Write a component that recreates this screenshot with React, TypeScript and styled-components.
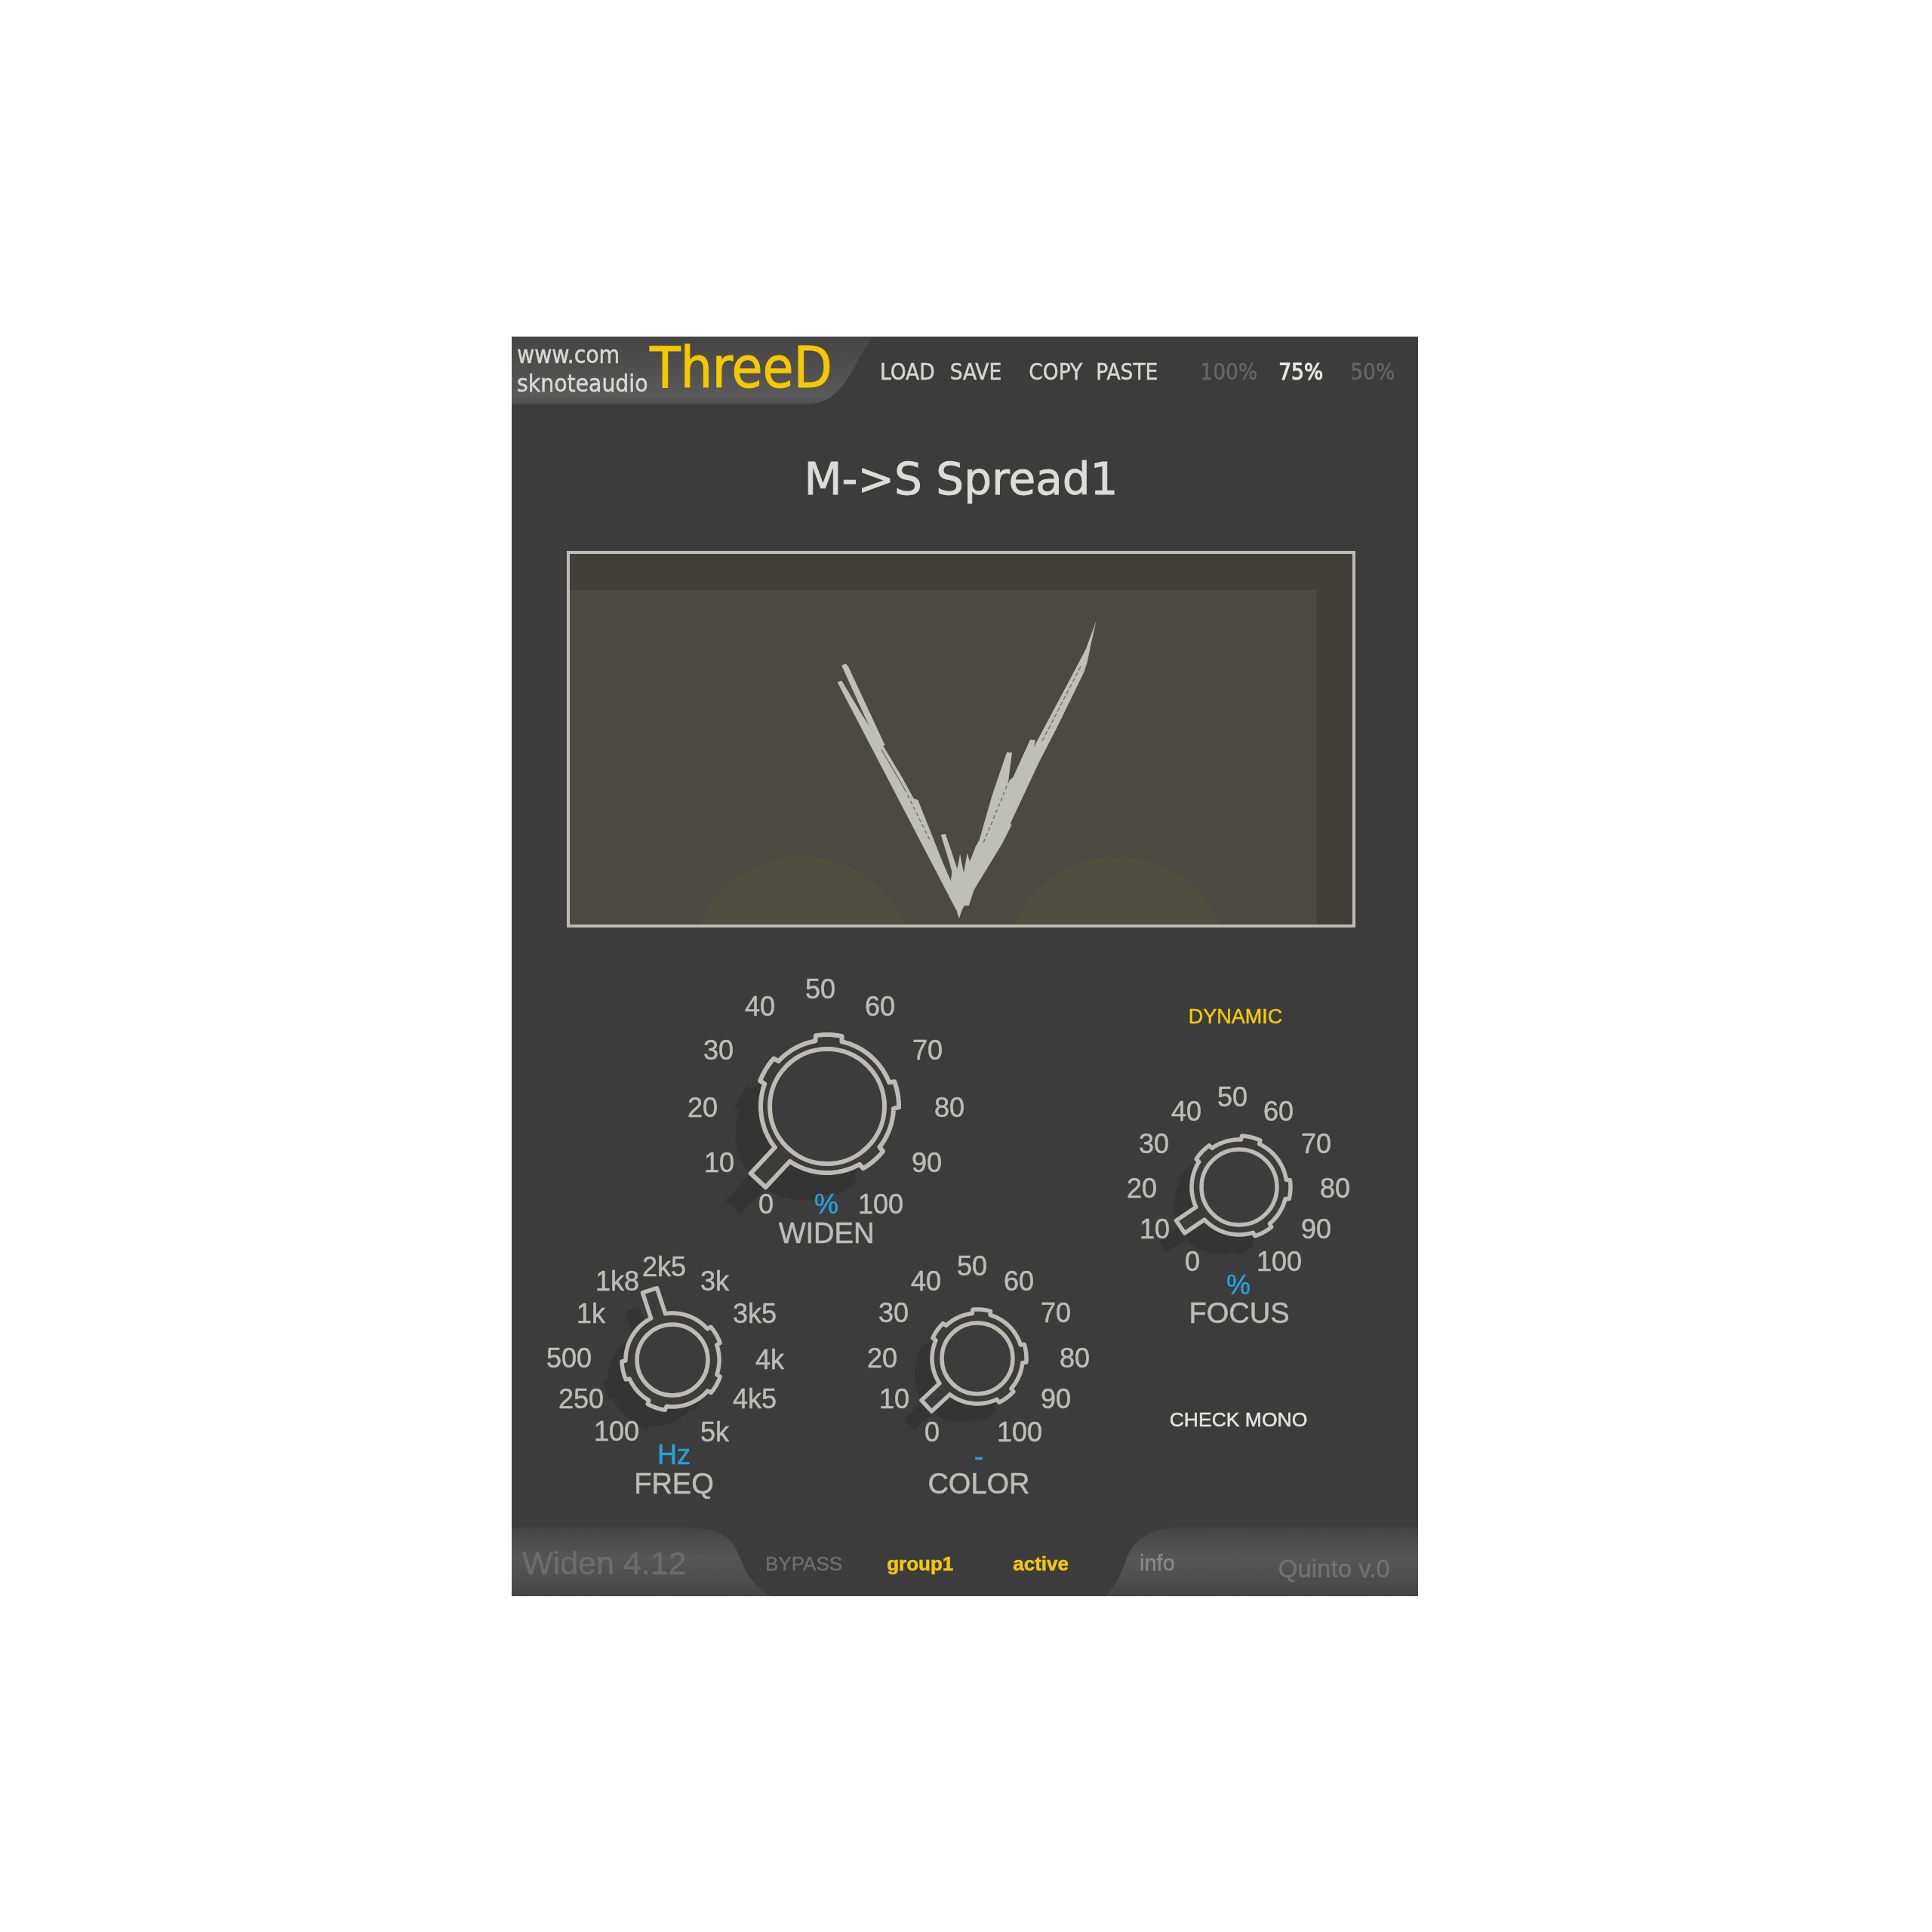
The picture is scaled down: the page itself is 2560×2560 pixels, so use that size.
import styled, { createGlobalStyle } from "styled-components"

const GlobalStyle = createGlobalStyle`
  html, body {
    margin: 0;
    background: #ffffff;
  }
`

const Page = styled.div`
  width: 2560px;
  height: 2560px;
  padding: 446px 0 0 678px;
  box-sizing: border-box;
  background: #ffffff;
`
const Panel = styled.div`
  width: 1201px;
  height: 1669px;
  display: flex;
  flex-direction: column;
  background: #3c3c3c;
  color: #bdbdb7;
  font-family: "Liberation Sans", Arial, sans-serif;
  -webkit-text-stroke: 0.5px currentColor;
  filter: blur(0.7px);
`

const Header = styled.header`
  height: 90px;
  display: flex;
  align-items: center;
`
const Brand = styled.div`
  width: 488px;
  height: 90px;
  flex: none;
  display: flex;
  align-items: center;
  padding-left: 7px;
  box-sizing: border-box;
  background: linear-gradient(to bottom, #444444 0%, #5a5a5a 88%, #4c4c4c 100%);
  clip-path: path("M0 0 L480 0 C462 20 452 50 436 68 C422 84 408 90 388 90 L0 90 Z");
  font-family: "DejaVu Sans Condensed", "DejaVu Sans", sans-serif;
  font-stretch: condensed;
`
const BrandLines = styled.div`
  width: 176px;
  flex: none;
  font-size: 31.5px;
  line-height: 37.5px;
  color: #d8d8d4;
  margin-top: -3px;
`
const BrandName = styled.div`
  font-size: 74px;
  line-height: 72px;
  color: #f5c800;
  margin-top: -8px;
  -webkit-text-stroke: 1px currentColor;
`
const Toolbar = styled.nav`
  display: flex;
  font-family: "DejaVu Sans Condensed", "DejaVu Sans", sans-serif;
  font-stretch: condensed;
  font-size: 29.5px;
  margin-top: 3px;
`
const ToolButton = styled.span<{ $gap: number; $tone?: string; $on?: boolean }>`
  margin-left: ${p => p.$gap}px;
  color: ${p => p.$tone ?? "#d6d6d2"};
  -webkit-text-stroke: ${p => (p.$on ? 1.1 : 0.5)}px currentColor;
`

const Title = styled.h1`
  margin: 64px 0 0;
  font: 400 58px/70px "DejaVu Sans", sans-serif;
  color: #dcdcd8;
  text-align: center;
  padding-right: 10px;
  -webkit-text-stroke: 0.9px currentColor;
`

const Monitor = styled.div`
  position: relative;
  width: 1045px;
  height: 499px;
  margin: 60px 0 0 73px;
  flex: none;
  box-sizing: border-box;
  border: 4px solid #bcbcb5;
  background: #403f3a;
  overflow: hidden;
`
const Plate = styled.div`
  height: 443px;
  width: 990px;
  margin-top: 48px;
  background: #4a4a42;
`
const Scope = styled.svg`
  position: absolute;
  inset: 0;
  width: 100%;
  height: 100%;
`

const Controls = styled.div`
  display: flex;
  height: 700px;
  margin: 56px 0 0 42px;
`
const DialColumn = styled.div`
  width: 730px;
  flex: none;
  display: flex;
  flex-direction: column;
`
const DialRow = styled.div`
  display: flex;
  justify-content: space-between;
`
const SideColumn = styled.div`
  margin-left: 40px;
  width: 310px;
  display: flex;
  flex-direction: column;
`
const DynamicLabel = styled.div`
  margin: 46px 0 0 -16px;
  font-size: 27px;
  line-height: 32px;
  color: #f2c80c;
  text-align: center;
`
const CheckMono = styled.div`
  margin: 101px 0 0 -8px;
  font-size: 26.5px;
  line-height: 30px;
  color: #e4e4e0;
  text-align: center;
`

const DialBox = styled.div<{ $w: number; $h: number; $indent?: number; $top?: number }>`
  position: relative;
  flex: none;
  width: ${p => p.$w}px;
  height: ${p => p.$h}px;
  margin-left: ${p => p.$indent ?? 0}px;
  margin-top: ${p => p.$top ?? 0}px;
`
const DialDrawing = styled.svg`
  position: absolute;
  inset: 0;
`
const Tick = styled.span<{ $x: number; $y: number }>`
  position: absolute;
  left: ${p => p.$x}px;
  top: ${p => p.$y + 1}px;
  transform: translate(-50%, -50%);
  font-size: 36px;
  line-height: 40px;
  white-space: nowrap;
  color: #bdbdb7;
`
const Unit = styled(Tick)`
  color: #2a9fdc;
`
const DialName = styled(Tick)`
  font-size: 38px;
`

const Footer = styled.footer`
  margin-top: auto;
  height: 91px;
  display: flex;
  align-items: center;
`
const FooterTab = styled.div<{ $side: "left" | "right" }>`
  height: 91px;
  display: flex;
  align-items: center;
  flex: none;
  box-sizing: border-box;
  background: linear-gradient(to bottom, #454545 0%, #565656 45%, #4e4e4e 75%, #444444 100%);
  ${p =>
    p.$side === "left"
      ? `width: 345px;
         padding-left: 14px;
         clip-path: path("M0 0 L225 0 C262 0 284 6 296 26 C306 46 314 78 345 91 L0 91 Z");`
      : `width: 415px;
         margin-left: auto;
         padding-left: 46px;
         clip-path: path("M101 0 L415 0 L415 91 L0 91 C14 78 22 60 28 44 C36 16 60 0 101 0 Z");`}
`
const Version = styled.span`
  font-size: 43px;
  color: #6c6c6c;
  margin-top: 3px;
`
const Info = styled.span`
  font-size: 29px;
  color: #888888;
  margin-top: 4px;
`
const PluginName = styled.span`
  font-size: 33px;
  color: #727272;
  margin: 19px 0 0 137px;
`
const FooterItem = styled.span<{ $gap: number; $active?: boolean }>`
  margin: 6px 0 0 ${p => p.$gap}px;
  font-size: 26px;
  font-weight: ${p => (p.$active ? 700 : 400)};
  color: ${p => (p.$active ? "#f2c80c" : "#6e6e6e")};
`

type Label = { t: string; x: number; y: number }

type KnobProps = {
  w: number
  h: number
  ox: number
  oy: number
  cx: number
  cy: number
  inner: number
  outer: number
  nub: number
  angle: number
  len: number
  pw: number
  line: number
  offsets: number[]
  labels: Label[]
  unit: Label
  name: Label
  indent?: number
  top?: number
}

const polar = (cx: number, cy: number, r: number, deg: number) => {
  const a = (deg * Math.PI) / 180
  return [cx + r * Math.sin(a), cy - r * Math.cos(a)]
}

function knobOutline(p: KnobProps, cx: number, cy: number) {
  const hw = (Math.asin(p.pw / 2 / p.outer) * 180) / Math.PI
  const span = 11
  const pts: number[][] = []
  for (let d = hw; d <= 360 - hw; d += 1) {
    const onNub = p.offsets.some(o => Math.abs(d - o) <= span)
    pts.push(polar(cx, cy, p.outer + (onNub ? p.nub : 0), p.angle + d))
  }
  pts.push(polar(cx, cy, p.outer, p.angle - hw))
  const a = (p.angle * Math.PI) / 180
  const ux = Math.sin(a)
  const uy = -Math.cos(a)
  const vx = Math.cos(a)
  const vy = Math.sin(a)
  pts.push([cx + ux * p.len - (vx * p.pw) / 2, cy + uy * p.len - (vy * p.pw) / 2])
  pts.push([cx + ux * p.len + (vx * p.pw) / 2, cy + uy * p.len + (vy * p.pw) / 2])
  return "M" + pts.map(q => `${q[0].toFixed(1)} ${q[1].toFixed(1)}`).join("L") + "Z"
}

function Knob(props: KnobProps) {
  const { w, h, ox, oy, labels, unit, name } = props
  const cx = props.cx - ox
  const cy = props.cy - oy
  const outline = knobOutline(props, cx, cy)
  const shift = props.outer * 0.38
  return (
    <DialBox $w={w} $h={h} $indent={props.indent} $top={props.top}>
      <DialDrawing width={w} height={h} viewBox={`0 0 ${w} ${h}`}>
        <path d={outline} fill="#343434" transform={`translate(${-shift} ${shift * 1.08})`} />
        <path d={outline} fill="#3c3c3c" stroke="#bcbcb5" strokeWidth={props.line} strokeLinejoin="round" />
        <circle cx={cx} cy={cy} r={props.inner} fill="none" stroke="#bcbcb5" strokeWidth={props.line} />
      </DialDrawing>
      {labels.map(l => (
        <Tick key={l.t} $x={l.x - ox} $y={l.y - oy}>
          {l.t}
        </Tick>
      ))}
      <Unit $x={unit.x - ox} $y={unit.y - oy}>
        {unit.t}
      </Unit>
      <DialName $x={name.x - ox} $y={name.y - oy}>
        {name.t}
      </DialName>
    </DialBox>
  )
}

const widenLabels: Label[] = [
  { t: "50", x: 1087, y: 1310 },
  { t: "40", x: 1007, y: 1333 },
  { t: "60", x: 1166, y: 1333 },
  { t: "30", x: 952, y: 1391 },
  { t: "70", x: 1229, y: 1391 },
  { t: "20", x: 931, y: 1467 },
  { t: "80", x: 1258, y: 1467 },
  { t: "10", x: 953, y: 1540 },
  { t: "90", x: 1228, y: 1540 },
  { t: "0", x: 1015, y: 1595 },
  { t: "100", x: 1167, y: 1595 },
]
const focusLabels: Label[] = [
  { t: "50", x: 1633, y: 1453 },
  { t: "40", x: 1572, y: 1472 },
  { t: "60", x: 1694, y: 1472 },
  { t: "30", x: 1529, y: 1515 },
  { t: "70", x: 1744, y: 1515 },
  { t: "20", x: 1513, y: 1574 },
  { t: "80", x: 1769, y: 1574 },
  { t: "10", x: 1530, y: 1628 },
  { t: "90", x: 1744, y: 1628 },
  { t: "0", x: 1580, y: 1671 },
  { t: "100", x: 1695, y: 1671 },
]
const freqLabels: Label[] = [
  { t: "2k5", x: 880, y: 1678 },
  { t: "1k8", x: 818, y: 1697 },
  { t: "3k", x: 947, y: 1697 },
  { t: "1k", x: 783, y: 1740 },
  { t: "3k5", x: 1000, y: 1740 },
  { t: "500", x: 754, y: 1799 },
  { t: "4k", x: 1020, y: 1801 },
  { t: "250", x: 770, y: 1853 },
  { t: "4k5", x: 1000, y: 1853 },
  { t: "100", x: 817, y: 1896 },
  { t: "5k", x: 947, y: 1897 },
]
const colorLabels: Label[] = [
  { t: "50", x: 1288, y: 1677 },
  { t: "40", x: 1227, y: 1697 },
  { t: "60", x: 1350, y: 1697 },
  { t: "30", x: 1184, y: 1739 },
  { t: "70", x: 1399, y: 1739 },
  { t: "20", x: 1169, y: 1799 },
  { t: "80", x: 1424, y: 1799 },
  { t: "10", x: 1185, y: 1853 },
  { t: "90", x: 1399, y: 1853 },
  { t: "0", x: 1235, y: 1897 },
  { t: "100", x: 1351, y: 1897 },
]

const nubOffsets = [78, 138, 217, 276]

function ScopeTrace() {
  return (
    <Scope viewBox="22 42 1506 1473" preserveAspectRatio="none">
      <ellipse cx={470} cy={1695} rx={218} ry={450} fill="#4f4d3d" />
      <ellipse cx={1075} cy={1695} rx={218} ry={450} fill="#4f4d3d" />
      <g fill="#bfbfb9">
        <polygon points="545,485 553,478 558,490 628,800 620,818 590,690" />
        <polygon points="537,552 545,545 590,700 625,805 660,925 684,1015 692,1020 740,1270 776,1440 772,1462 765,1455" />
        <polygon points="736,1158 745,1155 763,1265 775,1340 762,1340 752,1265" />
        <polygon points="755,1340 761,1265 766,1310 773,1235 780,1310 787,1230 795,1290 803,1205 812,1300 790,1440 770,1440" />
        <polygon points="1035,308 1025,400 1018,470 1012,510 960,730 925,870 870,1112 872,1120 855,1190 775,1462 770,1440 785,1300 803,1205 810,1180 835,1000 863,830 873,832 866,945 875,930 908,780 918,782 915,810 1000,480 1015,420" />
        <polygon points="765,1450 778,1450 771,1492" />
      </g>
      <g fill="none" stroke="#4a4a42" strokeWidth={2} opacity={0.7}>
        <polyline points="622,820 670,990" />
        <polyline points="672,1000 715,1180" strokeDasharray="14 10" />
        <polyline points="1005,490 930,790" strokeDasharray="16 8" />
        <polyline points="868,940 818,1190" strokeDasharray="14 10" />
      </g>
    </Scope>
  )
}

export default function App() {
  return (
    <Page>
      <GlobalStyle />
      <Panel>
        <Header>
          <Brand>
            <BrandLines>
              www.com
              <br />
              sknoteaudio
            </BrandLines>
            <BrandName>ThreeD</BrandName>
          </Brand>
          <Toolbar>
            <ToolButton $gap={0}>LOAD</ToolButton>
            <ToolButton $gap={20}>SAVE</ToolButton>
            <ToolButton $gap={36}>COPY</ToolButton>
            <ToolButton $gap={18}>PASTE</ToolButton>
            <ToolButton $gap={56} $tone="#666666">
              100%
            </ToolButton>
            <ToolButton $gap={28} $tone="#e6e6e2" $on>
              75%
            </ToolButton>
            <ToolButton $gap={36} $tone="#666666">
              50%
            </ToolButton>
          </Toolbar>
        </Header>
        <Title>M-&gt;S Spread1</Title>
        <Monitor>
          <Plate />
          <ScopeTrace />
        </Monitor>
        <Controls>
          <DialColumn>
            <Knob
              w={390}
              h={370}
              ox={900}
              oy={1285}
              indent={180}
              cx={1096}
              cy={1466}
              inner={76}
              outer={88}
              nub={7}
              angle={223}
              len={134}
              pw={27}
              line={6}
              offsets={nubOffsets}
              labels={widenLabels}
              unit={{ t: "%", x: 1095, y: 1595 }}
              name={{ t: "WIDEN", x: 1095, y: 1633 }}
            />
            <DialRow>
              <Knob
                w={340}
                h={330}
                ox={720}
                oy={1655}
                cx={891}
                cy={1802}
                inner={47}
                outer={62}
                nub={5}
                angle={342}
                len={97}
                pw={20}
                line={5.5}
                offsets={nubOffsets}
                labels={freqLabels}
                unit={{ t: "Hz", x: 893, y: 1927 }}
                name={{ t: "FREQ", x: 893, y: 1965 }}
              />
              <Knob
                w={300}
                h={330}
                ox={1150}
                oy={1655}
                cx={1295}
                cy={1800}
                inner={47}
                outer={60}
                nub={5}
                angle={227}
                len={92}
                pw={20}
                line={5.5}
                offsets={nubOffsets}
                labels={colorLabels}
                unit={{ t: "-", x: 1297, y: 1929 }}
                name={{ t: "COLOR", x: 1297, y: 1965 }}
              />
            </DialRow>
          </DialColumn>
          <SideColumn>
            <DynamicLabel>DYNAMIC</DynamicLabel>
            <Knob
              w={310}
              h={335}
              ox={1490}
              oy={1430}
              top={67}
              cx={1642}
              cy={1573}
              inner={50}
              outer={63}
              nub={5}
              angle={236}
              len={94}
              pw={20}
              line={5.5}
              offsets={nubOffsets}
              labels={focusLabels}
              unit={{ t: "%", x: 1641, y: 1702 }}
              name={{ t: "FOCUS", x: 1642, y: 1739 }}
            />
            <CheckMono>CHECK MONO</CheckMono>
          </SideColumn>
        </Controls>
        <Footer>
          <FooterTab $side="left">
            <Version>Widen 4.12</Version>
          </FooterTab>
          <FooterItem $gap={-9}>BYPASS</FooterItem>
          <FooterItem $gap={59} $active>
            group1
          </FooterItem>
          <FooterItem $gap={79} $active>
            active
          </FooterItem>
          <FooterTab $side="right">
            <Info>info</Info>
            <PluginName>Quinto v.0</PluginName>
          </FooterTab>
        </Footer>
      </Panel>
    </Page>
  )
}
